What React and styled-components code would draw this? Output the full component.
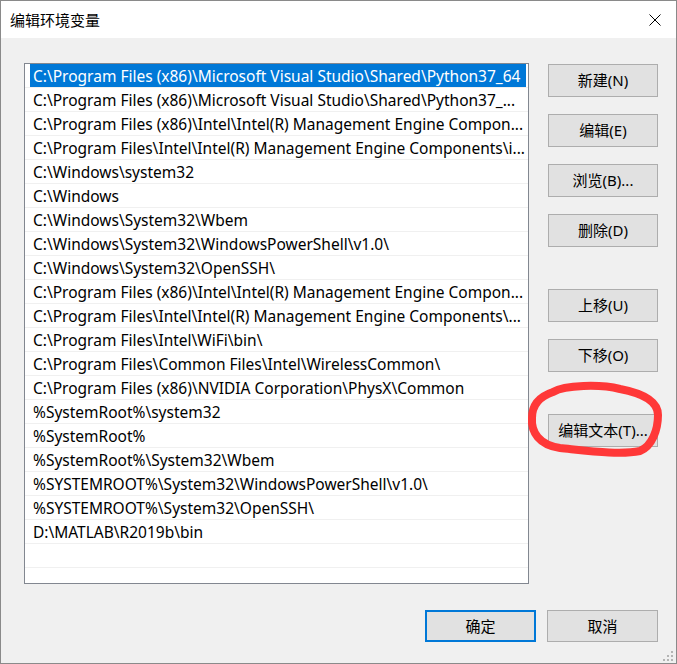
import styled, { createGlobalStyle } from 'styled-components';

const GlobalStyle = createGlobalStyle`
    html, body {
        margin: 0;
        padding: 0;
        background: #f0f0f0;
    }
    body {
        font-family: "Microsoft YaHei UI", "Noto Sans", "Noto Sans CJK SC", sans-serif;
        font-size: 15px;
        color: #000;
    }
`

const paths = [
    'C:\\Program Files (x86)\\Microsoft Visual Studio\\Shared\\Python37_64',
    'C:\\Program Files (x86)\\Microsoft Visual Studio\\Shared\\Python37_...',
    'C:\\Program Files (x86)\\Intel\\Intel(R) Management Engine Compon...',
    'C:\\Program Files\\Intel\\Intel(R) Management Engine Components\\i...',
    'C:\\Windows\\system32',
    'C:\\Windows',
    'C:\\Windows\\System32\\Wbem',
    'C:\\Windows\\System32\\WindowsPowerShell\\v1.0\\',
    'C:\\Windows\\System32\\OpenSSH\\',
    'C:\\Program Files (x86)\\Intel\\Intel(R) Management Engine Compon...',
    'C:\\Program Files\\Intel\\Intel(R) Management Engine Components\\...',
    'C:\\Program Files\\Intel\\WiFi\\bin\\',
    'C:\\Program Files\\Common Files\\Intel\\WirelessCommon\\',
    'C:\\Program Files (x86)\\NVIDIA Corporation\\PhysX\\Common',
    '%SystemRoot%\\system32',
    '%SystemRoot%',
    '%SystemRoot%\\System32\\Wbem',
    '%SYSTEMROOT%\\System32\\WindowsPowerShell\\v1.0\\',
    '%SYSTEMROOT%\\System32\\OpenSSH\\',
    'D:\\MATLAB\\R2019b\\bin',
]

const sideButtons = [
    { label: '新建(N)', gap: 1 },
    { label: '编辑(E)', gap: 17 },
    { label: '浏览(B)...', gap: 17 },
    { label: '删除(D)', gap: 17 },
    { label: '上移(U)', gap: 42 },
    { label: '下移(O)', gap: 17 },
    { label: '编辑文本(T)...', gap: 42 },
]

export default function App() {
    return (
        <>
            <GlobalStyle />
            <Window>
                <TitleBar>
                    <Title>编辑环境变量</Title>
                    <CloseButton>
                        <svg width="12" height="12" viewBox="0 0 12 12">
                            <path d="M0.5 0.5 L11.5 11.5 M11.5 0.5 L0.5 11.5" stroke="#000" strokeWidth="1" fill="none" />
                        </svg>
                    </CloseButton>
                </TitleBar>
                <Body>
                    <Main>
                        <PathList>
                            {paths.map((p, i) => (
                                <Row key={i}>
                                    <Cell $selected={i === 0}>{p}</Cell>
                                </Row>
                            ))}
                            <Row><Cell /></Row>
                            <Row><Cell /></Row>
                        </PathList>
                        <SideButtons>
                            {sideButtons.map(b => (
                                <Button key={b.label} $gap={b.gap}>{b.label}</Button>
                            ))}
                        </SideButtons>
                    </Main>
                    <Footer>
                        <DialogButton $default>确定</DialogButton>
                        <DialogButton>取消</DialogButton>
                    </Footer>
                </Body>
                <Grip>
                    <svg width="12" height="11" viewBox="0 0 12 11">
                        <rect x="9" y="0" width="2" height="2" fill="#b4b4b4" />
                        <rect x="5" y="4" width="2" height="2" fill="#b4b4b4" />
                        <rect x="9" y="4" width="2" height="2" fill="#b4b4b4" />
                        <rect x="1" y="8" width="2" height="2" fill="#b4b4b4" />
                        <rect x="5" y="8" width="2" height="2" fill="#b4b4b4" />
                        <rect x="9" y="8" width="2" height="2" fill="#b4b4b4" />
                    </svg>
                </Grip>
                <Annotation width="677" height="664" viewBox="0 0 677 664">
                    <path
                        d="M553 392 C565 385, 600 384, 620 389 C641 393, 658 400, 658 415 C658 430, 652 446, 640 451 C620 455, 590 451, 560 448 C539 445, 531 432, 532 418 C532 404, 541 396, 553 392 Z"
                        stroke="#ff3838"
                        strokeWidth="8"
                        fill="none"
                        strokeLinecap="round"
                    />
                </Annotation>
            </Window>
        </>
    )
}

const Window = styled.div`
    position: relative;
    box-sizing: border-box;
    width: 677px;
    height: 664px;
    border: 1px solid #8a8a8a;
    background: #f0f0f0;
    display: flex;
    flex-direction: column;
    overflow: hidden;
`

const TitleBar = styled.div`
    height: 37px;
    flex-shrink: 0;
    background: #fff;
    display: flex;
    align-items: center;
    justify-content: space-between;
    padding-left: 9px;
`

const Title = styled.div`
    font-size: 15px;
    color: #000;
`

const CloseButton = styled.div`
    width: 42px;
    height: 100%;
    display: flex;
    align-items: center;
    justify-content: center;
`

const Body = styled.div`
    flex: 1;
    display: flex;
    flex-direction: column;
    padding: 25px 18px 0 23px;
`

const Main = styled.div`
    display: flex;
    justify-content: space-between;
`

const PathList = styled.div`
    box-sizing: border-box;
    width: 505px;
    height: 521px;
    border: 1px solid #828790;
    background: #fff;
    overflow: hidden;
`

const Row = styled.div`
    box-sizing: border-box;
    height: 24px;
    border-bottom: 1px solid #f0f0f0;
`

const Cell = styled.div`
    box-sizing: border-box;
    height: 23px;
    line-height: 21px;
    padding: 2px 0 0 3px;
    margin: 0 2px 0 5px;
    font-size: 15.5px;
    white-space: nowrap;
    overflow: hidden;
    background: ${props => props.$selected ? '#0078d7' : 'transparent'};
    color: ${props => props.$selected ? '#fff' : '#000'};
`

const SideButtons = styled.div`
    display: flex;
    flex-direction: column;
`

const Button = styled.div`
    box-sizing: border-box;
    width: 110px;
    height: 33px;
    padding-bottom: 2px;
    margin-top: ${props => props.$gap}px;
    background: #e1e1e1;
    border: 1px solid #adadad;
    display: flex;
    align-items: center;
    justify-content: center;
    font-size: 15px;
    white-space: nowrap;
`

const Footer = styled.div`
    display: flex;
    justify-content: flex-end;
    gap: 11px;
    margin-top: 26px;
`

const DialogButton = styled.div`
    box-sizing: border-box;
    width: 111px;
    height: 32px;
    padding-bottom: 2px;
    background: #e1e1e1;
    border: ${props => props.$default ? '2px solid #0078d7' : '1px solid #adadad'};
    display: flex;
    align-items: center;
    justify-content: center;
    font-size: 15px;
`

const Grip = styled.div`
    position: absolute;
    right: 2px;
    bottom: 1px;
    line-height: 0;
`

const Annotation = styled.svg`
    position: absolute;
    top: -1px;
    left: -1px;
    pointer-events: none;
`
